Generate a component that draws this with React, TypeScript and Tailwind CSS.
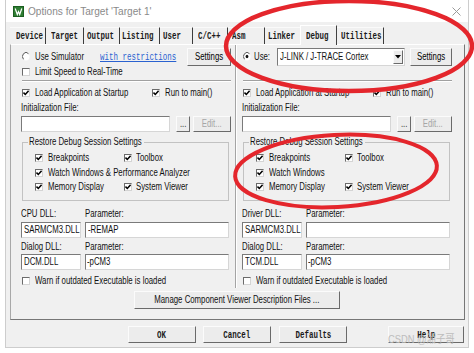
import React from "react";

type P = { children?: React.ReactNode; className?: string };

function T({ children, className = "" }: P) {
  return (
    <span
      className={`block w-fit whitespace-nowrap origin-left scale-x-[0.78] text-[10px] leading-[12px] font-['Liberation_Sans',Arial,sans-serif] text-[#111] ${className}`}
    >
      {children}
    </span>
  );
}

function TC({ children, className = "" }: P) {
  return (
    <span
      className={`block w-fit whitespace-nowrap origin-center scale-x-[0.78] text-[10px] leading-[12px] font-['Liberation_Sans',Arial,sans-serif] ${className}`}
    >
      {children}
    </span>
  );
}

function M({ children, className = "" }: P) {
  return (
    <span
      className={`block w-fit whitespace-nowrap origin-left scale-x-[0.68] text-[11px] leading-[12px] font-bold font-['Liberation_Mono','Courier_New',monospace] text-[#1a1a1a] ${className}`}
    >
      {children}
    </span>
  );
}

function MC({ children }: P) {
  return (
    <span className="block w-fit whitespace-nowrap origin-center scale-x-[0.68] text-[11px] leading-[12px] font-bold font-['Liberation_Mono','Courier_New',monospace] text-[#1a1a1a]">
      {children}
    </span>
  );
}

const BTN =
  "flex items-center justify-center bg-[#ececec] border border-t-[#fbfbfb] border-l-[#fbfbfb] border-r-[#6a6a6a] border-b-[#6a6a6a] shrink-0";
const INPUT =
  "flex items-center bg-white border border-t-[#7a7a7a] border-l-[#7a7a7a] border-r-[#d6d6d6] border-b-[#d6d6d6] overflow-hidden shrink-0";

function Box({ on }: { on?: boolean }) {
  return (
    <span className="flex items-center justify-center w-[8px] h-[8px] shrink-0 bg-white border border-t-[#6b6b6b] border-l-[#6b6b6b] border-r-[#d4d4d4] border-b-[#d4d4d4]">
      {on && (
        <svg width="6" height="6" viewBox="0 0 6 6" className="block">
          <path d="M0.5 2.6 L2.3 4.5 L5.6 0.8" fill="none" stroke="#000" strokeWidth="1.5" />
        </svg>
      )}
    </span>
  );
}

function Radio({ on }: { on?: boolean }) {
  return (
    <svg width="8" height="9" viewBox="0 0 8 9" className="block shrink-0">
      <ellipse cx="4" cy="4.5" rx="3.5" ry="4" fill="#fff" />
      <path d="M6.5 1.7 A3.5 4 0 1 0 1.5 7.3" fill="none" stroke="#5a5a5a" strokeWidth="1" />
      {on && <ellipse cx="4" cy="4.5" rx="1.4" ry="1.7" fill="#111" />}
    </svg>
  );
}

function Column({ right }: { right?: boolean }) {
  const restore = right
    ? [
        ["Breakpoints", "Toolbox"],
        ["Watch Windows", ""],
        ["Memory Display", "System Viewer"],
      ]
    : [
        ["Breakpoints", "Toolbox"],
        ["Watch Windows & Performance Analyzer", ""],
        ["Memory Display", "System Viewer"],
      ];
  const dll = right
    ? ["Driver DLL:", "SARMCM3.DLL", "", "TCM.DLL", "-pCM3"]
    : ["CPU DLL:", "SARMCM3.DLL", "-REMAP", "DCM.DLL", "-pCM3"];
  return (
    <div className="flex flex-col w-[210px] shrink-0">
      {right ? (
        <div className="mt-[2px] h-[19px] flex items-center">
          <span className="ml-[1px]">
            <Radio on />
          </span>
          <div className="ml-[3px] w-[23px]">
            <T>Use:</T>
          </div>
          <div className={`${INPUT} w-[128px] h-[18px] justify-between`}>
            <div className="ml-[2px] w-[100px]">
              <T>J-LINK / J-TRACE Cortex</T>
            </div>
            <div className={`${BTN} w-[10px] h-[14px] mr-[1px]`}>
              <svg width="6" height="4" viewBox="0 0 6 4" className="block">
                <path d="M0 0 H6 L3 3.5 Z" fill="#000" />
              </svg>
            </div>
          </div>
          <div className={`${BTN} ml-[5px] w-[42px] h-[18px]`}>
            <TC>Settings</TC>
          </div>
        </div>
      ) : (
        <div className="mt-[2px] h-[19px] flex items-center">
          <span className="ml-[1px]">
            <Radio />
          </span>
          <div className="ml-[5px] w-[65px]">
            <T>Use Simulator</T>
          </div>
          <div className="w-[87px]">
            <span className="block w-fit whitespace-nowrap origin-left scale-x-[0.68] text-[11px] leading-[12px] font-['Liberation_Mono','Courier_New',monospace] text-[#2a62d0] underline">
              with restrictions
            </span>
          </div>
          <div className={`${BTN} w-[44px] h-[18px]`}>
            <TC>Settings</TC>
          </div>
        </div>
      )}

      <div className="h-[12px] flex items-center">
        {!right && (
          <>
            <span className="ml-[1px]">
              <Box />
            </span>
            <div className="ml-[5px]">
              <T>Limit Speed to Real-Time</T>
            </div>
          </>
        )}
      </div>

      <div className="mt-[2px] ml-[1px] h-[2px] border-t border-t-[#a0a0a0] border-b border-b-white" />

      <div className="mt-[5px] h-[12px] flex items-center">
        <span className="ml-[1px]">
          <Box on />
        </span>
        <div className="ml-[5px] w-[117px]">
          <T>Load Application at Startup</T>
        </div>
        <Box on />
        <div className="ml-[5px]">
          <T>Run to main()</T>
        </div>
      </div>

      <div className="mt-[3px] h-[12px] flex items-center">
        <T>Initialization File:</T>
      </div>

      <div className="mt-[2px] h-[16px] flex">
        <div className={`${INPUT} w-[149px] h-[16px]`} />
        <div className={`${BTN} ml-[6px] w-[14px] h-[16px]`}>
          <TC className="text-[#333]">...</TC>
        </div>
        <div className={`${BTN} ml-[3px] w-[38px] h-[16px]`}>
          <TC className="text-[#a6a6a6]">Edit...</TC>
        </div>
      </div>

      <div className="relative mt-[10px] ml-[1px] w-[207px] h-[59px] border border-[#c2c2c2]">
        <div className="absolute left-[5px] -top-[7px] px-[1px] h-[12px] w-[116px] bg-[#f0f0f0]">
          <T>Restore Debug Session Settings</T>
        </div>
        <div className="mt-[8px] flex flex-col">
          {restore.map(([a, b], i) => (
            <div key={i} className={`h-[14px] flex items-center ${i === 1 ? "mt-[1px]" : ""}`}>
              <span className="ml-[12px]">
                <Box on />
              </span>
              <div className="ml-[5px] w-[76px]">
                <T>{a}</T>
              </div>
              {b && (
                <>
                  <Box on />
                  <div className="ml-[4px]">
                    <T>{b}</T>
                  </div>
                </>
              )}
            </div>
          ))}
        </div>
      </div>

      <div className="mt-[7px] h-[12px] flex items-center">
        <div className="w-[64px]">
          <T>{dll[0]}</T>
        </div>
        <T>Parameter:</T>
      </div>
      <div className="mt-[2px] h-[16px] flex">
        <div className={`${INPUT} w-[60px] h-[16px]`}>
          <div className="ml-[2px]">
            <T>{dll[1]}</T>
          </div>
        </div>
        <div className={`${INPUT} ml-[4px] w-[144px] h-[16px]`}>
          <div className="ml-[2px]">
            <T>{dll[2]}</T>
          </div>
        </div>
      </div>

      <div className="mt-[3px] h-[12px] flex items-center">
        <div className="w-[64px]">
          <T>Dialog DLL:</T>
        </div>
        <T>Parameter:</T>
      </div>
      <div className="mt-[1px] h-[16px] flex">
        <div className={`${INPUT} w-[60px] h-[16px]`}>
          <div className="ml-[2px]">
            <T>{dll[3]}</T>
          </div>
        </div>
        <div className={`${INPUT} ml-[4px] w-[144px] h-[16px]`}>
          <div className="ml-[1px]">
            <T>{dll[4]}</T>
          </div>
        </div>
      </div>

      <div className="mt-[5px] h-[12px] flex items-center">
        <span className="ml-[1px]">
          <Box />
        </span>
        <div className="ml-[5px]">
          <T>Warn if outdated Executable is loaded</T>
        </div>
      </div>
    </div>
  );
}

const TABS: [string, number, number][] = [
  ["Device", 36, 6],
  ["Target", 38, 5],
  ["Output", 36, 3],
  ["Listing", 40, 2],
  ["User", 33, 3],
  ["C/C++", 35, 5],
  ["Asm", 37, 4],
  ["Linker", 35, 3],
  ["Debug", 37, 5],
  ["Utilities", 47, 4],
];

export default function App() {
  return (
    <div className="relative w-[474px] h-[353px] bg-white overflow-hidden">
      <div className="ml-[5px] w-[464px] h-[348px] flex flex-col bg-[#f0f0f0] border border-t-0 border-[#cdcdcd]">
        {/* title bar */}
        <div className="h-[22px] flex items-center bg-white">
          <svg width="11" height="11" viewBox="0 0 11 11" className="ml-[7px] block shrink-0">
            <rect x="0" y="0" width="11" height="11" fill="#2e7d32" />
            <rect x="0.5" y="0.5" width="10" height="10" fill="none" stroke="#1b5e20" />
            <path d="M2.2 2.5 L4.3 8.5 L5.5 5.5 L6.7 8.5 L8.8 2.5" fill="none" stroke="#fff" strokeWidth="1.2" />
          </svg>
          <div className="ml-[4px] flex-1">
            <span className="block w-fit whitespace-nowrap origin-left scale-x-[0.92] text-[11px] leading-[13px] font-['Liberation_Sans',Arial,sans-serif] text-[#8a8a8a]">
              Options for Target 'Target 1'
            </span>
          </div>
          <svg width="9" height="9" viewBox="0 0 9 9" className="mr-[7px] block shrink-0">
            <path d="M0.5 0.5 L8.5 8.5 M8.5 0.5 L0.5 8.5" stroke="#9a9a9a" strokeWidth="1" />
          </svg>
        </div>

        {/* tabs */}
        <div className="h-[22px] ml-[4px] flex items-end">
          {TABS.map(([name, w, pl]) => {
            const sel = name === "Debug";
            const noRight = name === "Linker";
            return (
              <div
                key={name}
                style={{ width: w, paddingLeft: pl }}
                className={
                  sel
                    ? "relative z-10 h-[20px] -mb-[1px] flex items-center bg-[#f0f0f0] border-t border-t-white border-l border-l-white border-r border-r-[#404040] shrink-0"
                    : noRight
                    ? "h-[17px] flex items-center border-t border-t-[#fafafa] shrink-0"
                    : "h-[17px] flex items-center border-t border-t-[#fafafa] border-r border-r-[#3c3c3c] shrink-0"
                }
              >
                <M>{name}</M>
              </div>
            );
          })}
        </div>

        {/* panel */}
        <div className="ml-[4px] w-[455px] h-[276px] flex flex-col border border-t-white border-l-[#a8a8a8] border-r-[#767676] border-b-[#767676]">
          <div className="ml-[10px] flex">
            <Column />
            <div className="ml-[4px] w-[2px] h-[243px] border-l border-l-[#a4a4a4] border-r border-r-white" />
            <div className="ml-[5px]">
              <Column right />
            </div>
          </div>
          <div className={`${BTN} ml-[123px] mt-[3px] w-[206px] h-[18px]`}>
            <TC className="text-[#111]">Manage Component Viewer Description Files ...</TC>
          </div>
        </div>

        {/* bottom buttons */}
        <div className="mt-[6px] h-[17px] flex">
          <div className={`${BTN} ml-[122px] w-[68px] h-[17px]`}>
            <MC>OK</MC>
          </div>
          <div className={`${BTN} ml-[7px] w-[68px] h-[17px]`}>
            <MC>Cancel</MC>
          </div>
          <div className={`${BTN} ml-[8px] w-[68px] h-[17px]`}>
            <MC>Defaults</MC>
          </div>
          <div className={`${BTN} ml-[41px] w-[76px] h-[17px]`}>
            <MC>Help</MC>
          </div>
        </div>
      </div>

      {/* watermark */}
      <div className="absolute left-[388px] top-[333px] pointer-events-none">
        <span className="block w-fit whitespace-nowrap origin-left scale-x-[0.85] text-[11px] leading-[13px] font-['Liberation_Sans','Noto_Sans_CJK_SC',sans-serif] text-[#b8b8b8] opacity-90">
          CSDN @湘子哥
        </span>
      </div>

      {/* red annotation ellipses */}
      <svg width="474" height="353" viewBox="0 0 474 353" className="absolute left-0 top-0 pointer-events-none">
        <ellipse cx="349" cy="46" rx="123" ry="45" fill="none" stroke="#e4262c" strokeWidth="4.5" />
        <ellipse cx="336" cy="171" rx="101" ry="36" transform="rotate(-3 336 171)" fill="none" stroke="#e4262c" strokeWidth="4" />
      </svg>
    </div>
  );
}
